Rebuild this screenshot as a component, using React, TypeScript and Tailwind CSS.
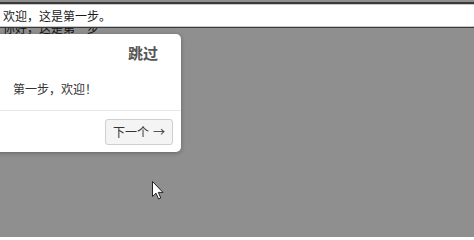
import React from "react";

const Cursor = () => (
  <svg
    width="12"
    height="19"
    viewBox="0 0 12 19"
    className="absolute left-[152px] top-[181px]"
  >
    <path
      d="M0.5 0.5 L0.5 15.5 L4 12.2 L6.6 18 L8.8 17 L6.3 11.4 L11 11.4 Z"
      fill="#fff"
      stroke="#222"
      strokeWidth="1"
      strokeLinejoin="round"
    />
  </svg>
);

const App: React.FC = () => {
  return (
    <div className="relative h-[237px] w-[474px] overflow-hidden bg-white font-['Noto_Sans_CJK_SC','Noto_Sans',sans-serif]">
      <p className="pl-[3px] pt-[21px] text-[12px] leading-[14px] text-[#222]">
        你好，这是第一步
      </p>

      {/* overlay */}
      <div className="absolute inset-0 bg-black/[0.44]" />

      {/* top bar */}
      <div className="absolute left-0 right-0 top-[2px] border-t-2 border-b border-[#3a3a3a] bg-white">
        <div className="border-y border-[#c8c8c8] pl-[3px] text-[12px] leading-[21px] text-[#1a1a1a]">
          欢迎，这是第一步。
        </div>
      </div>

      {/* step popup */}
      <div className="absolute left-[-20px] top-[34px] w-[201px] rounded-[5px] bg-white shadow-[0_1px_4px_rgba(0,0,0,0.3)]">
        <div className="flex h-[38px] items-center justify-end pr-[23px]">
          <span className="text-[15px] font-bold leading-[20px] text-[#555]">
            跳过
          </span>
        </div>
        <div className="pb-[14px] pl-[33px] pt-[10px] text-[12px] leading-[14px] text-[#333]">
          第一步，欢迎！
        </div>
        <div className="flex justify-end border-t border-[#e8e8e8] pb-[7px] pr-[8px] pt-[8px]">
          <button className="flex h-[26px] w-[68px] items-center justify-center gap-[4px] rounded-[3px] border border-[#cfcfcf] bg-[#f4f4f4] text-[12px] text-[#333]">
            <span>下一个</span>
            <span>→</span>
          </button>
        </div>
      </div>

      <Cursor />
    </div>
  );
};

export default App;
